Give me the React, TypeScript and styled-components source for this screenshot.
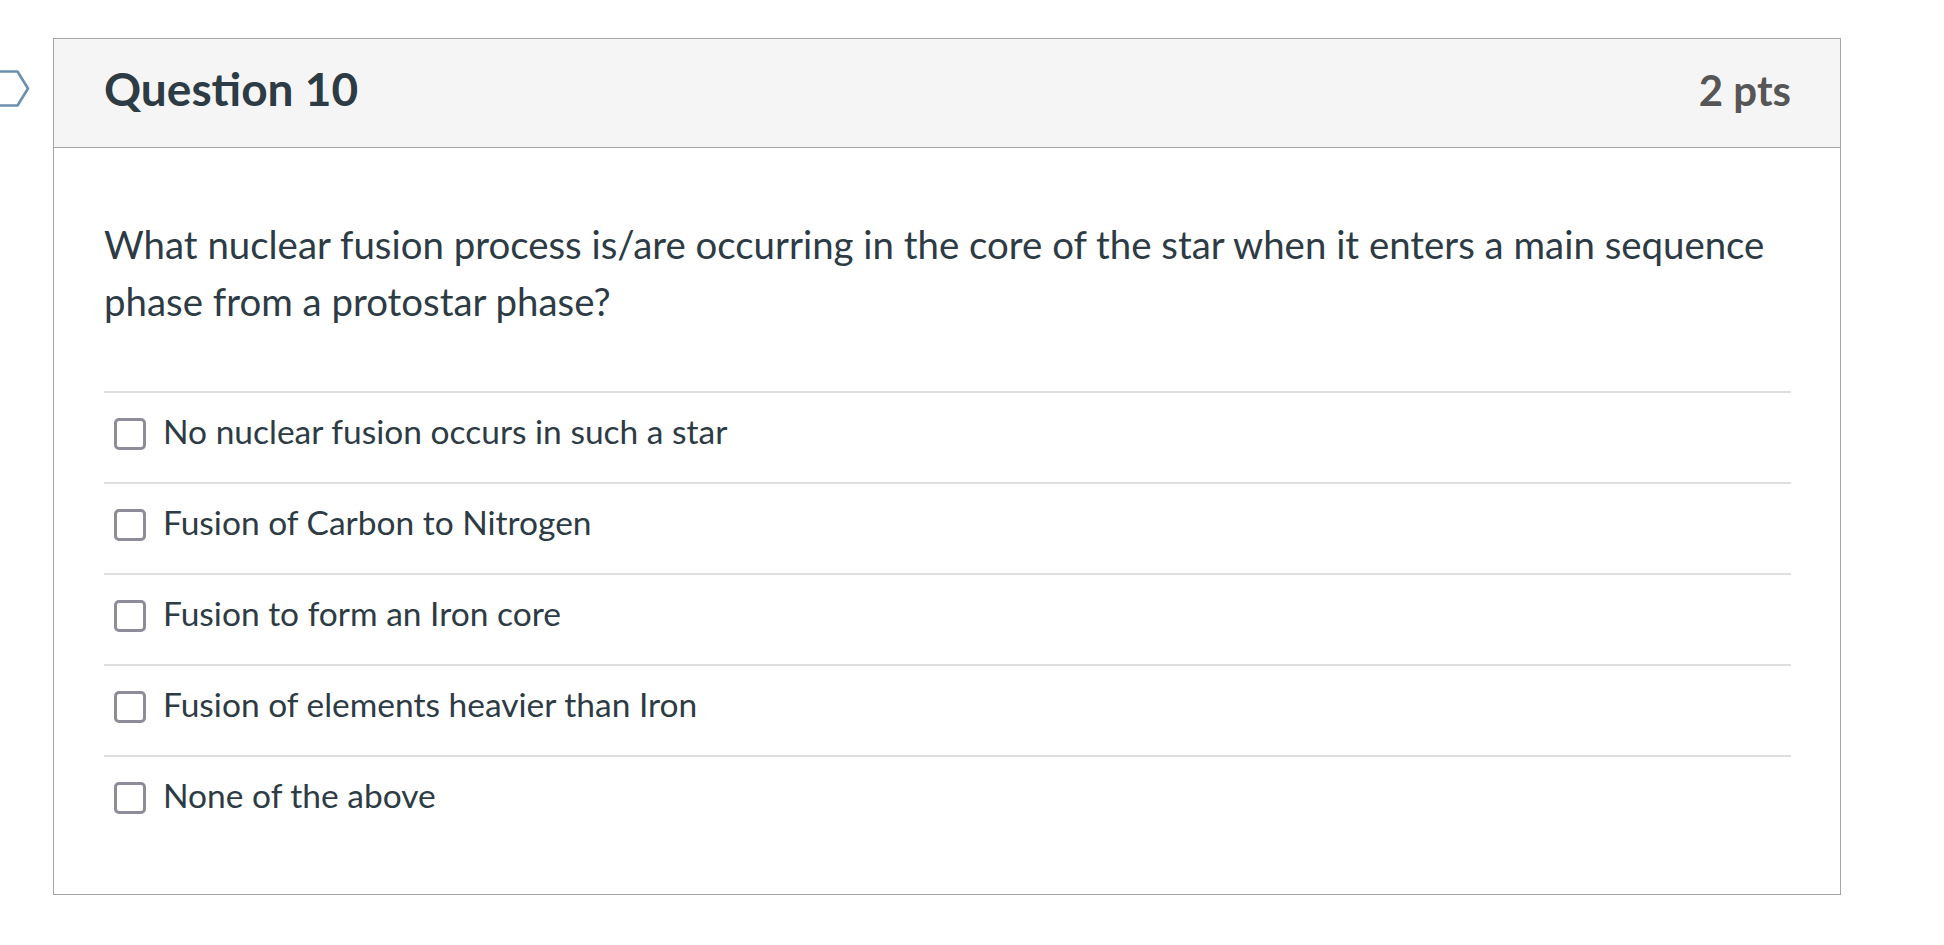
import React from 'react';
import styled, { createGlobalStyle } from 'styled-components';

const GlobalStyle = createGlobalStyle`
  html, body {
    margin: 0;
    padding: 0;
    background: #fff;
  }

  body {
    font-family: Lato, 'Open Sans', sans-serif;
    color: #2d3b45;
  }
`;

const Page = styled.div`
  display: flex;
  align-items: flex-start;
  padding-top: 38px;
  gap: 22px;
`;

const Marker = styled.svg`
  flex: none;
  width: 31px;
  height: 40px;
  margin-top: 31px;
  overflow: hidden;
`;

const Card = styled.section`
  box-sizing: border-box;
  width: 1788px;
  border: 1px solid #a5a5a5;
  background: #fff;
`;

const Header = styled.header`
  box-sizing: border-box;
  height: 109px;
  display: flex;
  align-items: baseline;
  justify-content: space-between;
  padding: 22px 49px 0 50px;
  background: #f5f5f5;
  border-bottom: 1px solid #a5a5a5;
`;

const Title = styled.h2`
  margin: 0;
  font-size: 46px;
  font-weight: 700;
  color: #2d3b45;
`;

const Points = styled.div`
  font-size: 42px;
  font-weight: 700;
  color: #565656;
`;

const Body = styled.div`
  padding: 68px 49px 48px 50px;
`;

const Question = styled.p`
  margin: 0 0 61px;
  font-size: 38.4px;
  line-height: 57px;
  color: #2d3b45;
`;

const Answers = styled.ul`
  list-style: none;
  margin: 0;
  padding: 0;
`;

const Answer = styled.li`
  box-sizing: border-box;
  height: 91px;
  display: flex;
  align-items: flex-start;
  gap: 17px;
  padding: 18px 0 0 10px;
  border-top: 2px solid #dedede;
`;

const Box = styled.span`
  flex: none;
  box-sizing: border-box;
  width: 32px;
  height: 32px;
  margin-top: 7px;
  border: 3px solid #8e8c9a;
  border-radius: 5px;
  background: #fff;
`;

const Label = styled.span`
  font-size: 33.5px;
  line-height: 40px;
  color: #2d3b45;
`;

const ANSWERS = [
  'No nuclear fusion occurs in such a star',
  'Fusion of Carbon to Nitrogen',
  'Fusion to form an Iron core',
  'Fusion of elements heavier than Iron',
  'None of the above',
];

const App: React.FC = () => (
  <>
    <GlobalStyle />
    <Page>
      <Marker viewBox="0 0 31 40" aria-hidden="true">
        <path
          d="M-6 2.5 H17.5 L28 19.5 L17.5 36.5 H-6"
          fill="none"
          stroke="#6b8fae"
          strokeWidth="2.6"
          strokeLinejoin="round"
        />
      </Marker>
      <Card>
        <Header>
          <Title>Question 10</Title>
          <Points>2 pts</Points>
        </Header>
        <Body>
          <Question>
            What nuclear fusion process is/are occurring in the core of the star
            when it enters a main sequence phase from a protostar phase?
          </Question>
          <Answers>
            {ANSWERS.map(text => (
              <Answer key={text}>
                <Box />
                <Label>{text}</Label>
              </Answer>
            ))}
          </Answers>
        </Body>
      </Card>
    </Page>
  </>
);

export default App;
